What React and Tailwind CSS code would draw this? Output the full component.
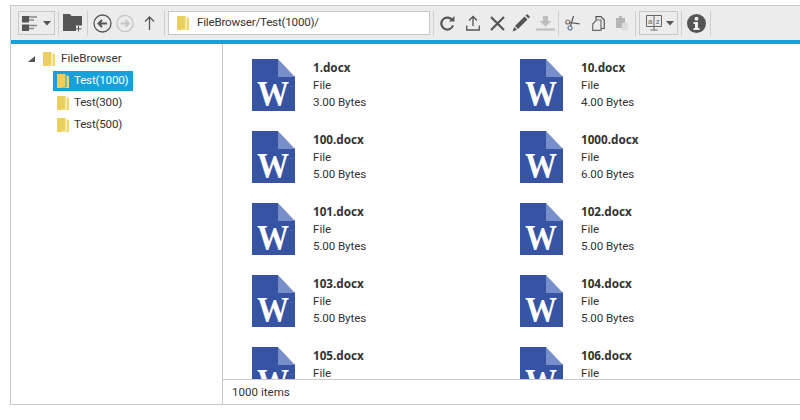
import React from "react";

const files = [
  { name: "1.docx", size: "3.00 Bytes" },
  { name: "10.docx", size: "4.00 Bytes" },
  { name: "100.docx", size: "5.00 Bytes" },
  { name: "1000.docx", size: "6.00 Bytes" },
  { name: "101.docx", size: "5.00 Bytes" },
  { name: "102.docx", size: "5.00 Bytes" },
  { name: "103.docx", size: "5.00 Bytes" },
  { name: "104.docx", size: "5.00 Bytes" },
  { name: "105.docx", size: "5.00 Bytes" },
  { name: "106.docx", size: "5.00 Bytes" },
];

const Sep = () => <div className="w-px h-[25px] bg-[#cfcfcf] shrink-0" />;

const Btn = ({ w = "w-6", children }) => (
  <div className={`${w} h-6 flex items-center justify-center shrink-0`}>{children}</div>
);

const Caret = () => (
  <svg width="9" height="5" viewBox="0 0 9 5"><path d="M0 0h8L4 4.500z" fill="#555" /></svg>
);

const FolderIcon = () => (
  <svg width="12" height="14" viewBox="0 0 12 14" className="shrink-0">
    <path d="M9.500 1.500H11l1 1V14H4l5.500-1z" fill="#efd76c" />
    <path d="M0 0h8.500v12.500L4 14H0z" fill="#ecd05f" />
  </svg>
);

const DocIcon = () => (
  <svg width="43" height="52" viewBox="0 0 43 52" className="shrink-0">
    <path d="M0 0h26v17h17v35H0z" fill="#3753a4" />
    <path d="M26 0l17 18H26z" fill="#768fc8" />
    <text x="5" y="47" textLength="32" lengthAdjust="spacingAndGlyphs" fontSize="36" fontWeight="700" fontFamily="'Liberation Serif', serif" fill="#fff">W</text>
  </svg>
);

const ViewIcon = () => (
  <svg width="16" height="15" viewBox="0 0 16 15">
    <path d="M0 0h7v6.500H0zM0 8.500h7V15H0z" fill="#555" />
    <path d="M7 1h8M7 4h5M7 9.500h8M7 12.500h5" stroke="#888" strokeWidth="1.300" />
  </svg>
);

const NewFolderIcon = () => (
  <svg width="20" height="18" viewBox="0 0 20 18">
    <path d="M0 0h7l1.500 2H19v9.500h-6V17H0z" fill="#555" />
    <path d="M15.500 12v5.500M13 14.800h5.500" stroke="#555" strokeWidth="1" />
  </svg>
);

const CircleArrow = ({ dir, color }) => (
  <svg width="19" height="19" viewBox="0 0 19 19" fill="none" stroke={color} strokeWidth="1.300">
    <circle cx="9.500" cy="9.500" r="8.500" />
    <path
      d={dir === "left" ? "M14 9.500H5.500M9 6L5.500 9.500L9 13" : "M5 9.500h8.500M10 6l3.500 3.500L10 13"}
      strokeWidth="2"
    />
  </svg>
);

const UpArrow = () => (
  <svg width="11" height="14" viewBox="0 0 11 14" fill="none" stroke="#555" strokeWidth="1.300">
    <path d="M5.500 14V1M1 5.500L5.500 1L10 5.500" />
  </svg>
);

const RefreshIcon = () => (
  <svg width="15" height="15" viewBox="0 0 15 15" fill="none">
    <path d="M12.500 4.500A6 6 0 1 0 13 9.500" stroke="#555" strokeWidth="2.200" />
    <path d="M9 5.500h5.500V0z" fill="#555" />
  </svg>
);

const UploadIcon = () => (
  <svg width="14" height="16" viewBox="0 0 14 16" fill="none" stroke="#555" strokeWidth="1.300">
    <path d="M7 11V2M3 5.500L7 1.500l4 4" />
    <path d="M.700 10.500v4.500h12.600v-4.500" />
  </svg>
);

const CloseIcon = () => (
  <svg width="15" height="15" viewBox="0 0 15 15" fill="none" stroke="#555" strokeWidth="2.200">
    <path d="M1 1l13 13M14 1L1 14" />
  </svg>
);

const PencilIcon = () => (
  <svg width="18" height="18" viewBox="0 0 18 18" fill="#555">
    <path d="M3 12L12.500 2.500L15.500 5.500L6 15z" />
    <path d="M2.200 13L5 15.800L.500 17.500z" />
    <path d="M13.500 1.500l1-1a1 1 0 0 1 1.200 0l1.800 1.800a1 1 0 0 1 0 1.200l-1 1z" />
  </svg>
);

const DownloadIcon = () => (
  <svg width="19" height="16" viewBox="0 0 19 16">
    <path d="M7 1h5v5h3.500l-6 5.500-6-5.500H7z" fill="#bdbdbd" />
    <path d="M0 14.500h19" stroke="#bdbdbd" strokeWidth="2" />
  </svg>
);

const CutIcon = () => (
  <svg width="15" height="16" viewBox="0 0 15 16" fill="none" stroke="#555" strokeWidth="1.200">
    <circle cx="2.800" cy="7" r="2" stroke="#8a6a4a" />
    <circle cx="5" cy="13" r="2" stroke="#5a7a9a" />
    <path d="M4.800 7.500L14.500 8.800M5.500 11L8.500 1" />
  </svg>
);

const CopyIcon = () => (
  <svg width="13" height="15" viewBox="0 0 13 15" fill="none" stroke="#555" strokeWidth="1.200">
    <path d="M4 4V.700h5l3.300 3.300v8.500H9" />
    <path d="M.700 8L4.500 4H9v10.300H.700z" fill="#ececec" stroke="#6a6a6a" />
  </svg>
);

const PasteIcon = () => (
  <svg width="13" height="15" viewBox="0 0 13 15">
    <path d="M0 2h3V0h3v2h3v10H0z" fill="#b5b5b5" />
    <path d="M6 7h6v7.500H6z" fill="#dcdcdc" />
  </svg>
);

const SortIcon = () => (
  <svg width="16" height="16" viewBox="0 0 16 16" fill="none" stroke="#666" className="shrink-0">
    <path d="M.5 .5h15v11H.5zM8 .5v14M4.500 15h7" />
    <text x="4.300" y="9" fontSize="8" fontFamily="'Liberation Sans', sans-serif" fill="#7a5a40" stroke="none" textAnchor="middle">a</text>
    <text x="11.800" y="9" fontSize="8" fontFamily="'Liberation Sans', sans-serif" fill="#4a6a8a" stroke="none" textAnchor="middle">z</text>
  </svg>
);

const InfoIcon = () => (
  <svg width="19" height="19" viewBox="0 0 19 19">
    <circle cx="9.500" cy="9.500" r="9.500" fill="#555" />
    <circle cx="9.500" cy="4.800" r="2" fill="#ececec" />
    <path d="M6.500 8h4.500v6h1.500v2h-6v-2H8v-4H6.500z" fill="#ececec" />
  </svg>
);

const Toolbar = () => (
  <div className="h-[34px] bg-[#ececec] flex items-center pl-[7px] shrink-0">
    <div className="w-[37px] h-6 border border-[#c8c8c8] flex items-center pl-[3px] gap-[5px] mr-[3px] shrink-0">
      <ViewIcon />
      <Caret />
    </div>
    <Sep />
    <Btn w="w-[28px]"><NewFolderIcon /></Btn>
    <Sep />
    <Btn w="w-[28px]"><CircleArrow dir="left" color="#555" /></Btn>
    <Btn w="w-[18px]"><CircleArrow dir="right" color="#c4c4c4" /></Btn>
    <Btn w="w-[30px]"><UpArrow /></Btn>
    <Sep />
    <div className="w-[262px] h-6 ml-[3px] mr-[3px] bg-white border border-[#c8c8c8] flex items-center pl-2 gap-2 shrink-0">
      <FolderIcon />
      <span className="text-[#333] tracking-[-0.2px]">FileBrowser/Test(1000)/</span>
    </div>
    <Sep />
    <Btn w="w-[27px]"><RefreshIcon /></Btn>
    <Btn><UploadIcon /></Btn>
    <Btn><CloseIcon /></Btn>
    <Btn><PencilIcon /></Btn>
    <Btn w="w-[25px]"><DownloadIcon /></Btn>
    <Sep />
    <Btn w="w-[27px]"><CutIcon /></Btn>
    <Btn w="w-[24px]"><CopyIcon /></Btn>
    <Btn w="w-[25px]"><PasteIcon /></Btn>
    <Sep />
    <div className="w-[39px] h-6 ml-[3px] mr-[3px] border border-[#c8c8c8] flex items-center pl-[6px] gap-1 shrink-0">
      <SortIcon />
      <Caret />
    </div>
    <Sep />
    <Btn w="w-[28px]"><InfoIcon /></Btn>
    <Sep />
  </div>
);

const TreeItem = ({ label, active }) => (
  <div className={`h-5 w-[80px] flex items-center gap-[5px] pl-1 tracking-[-0.2px] ${active ? "bg-[#16a0dc] text-white" : "text-[#333]"}`}>
    <FolderIcon />
    <span>{label}</span>
  </div>
);

const Tree = () => (
  <div className="w-[212px] border-r border-[#c8c8c8] shrink-0 pt-[5px] pl-[17px]">
    <div className="h-5 flex items-center text-[#333]">
      <svg width="7" height="6" viewBox="0 0 7 6" className="mr-2"><path d="M7 0v6H0z" fill="#555" /></svg>
      <FolderIcon />
      <span className="ml-[6px]">FileBrowser</span>
    </div>
    <div className="ml-[25px] mt-[2px] flex flex-col gap-[2px]">
      <TreeItem label="Test(1000)" active />
      <TreeItem label="Test(300)" />
      <TreeItem label="Test(500)" />
    </div>
  </div>
);

const FileCard = ({ file }) => (
  <div className="h-[72px] flex items-start">
    <DocIcon />
    <div className="ml-[18px] leading-[17.500px] text-[#333]">
      <div className="font-bold text-[11.700px] font-['Noto_Sans',sans-serif]">{file.name}</div>
      <div>File</div>
      <div className="tracking-[-0.1px]">{file.size}</div>
    </div>
  </div>
);

export default function App() {
  return (
    <div className="w-[800px] h-[420px] bg-white overflow-hidden pl-[10px] pt-[5px] text-[11.600px] font-['Roboto',sans-serif]">
      <div className="h-[400px] border border-r-0 border-[#c8c8c8] flex flex-col">
        <Toolbar />
        <div className="h-[4px] bg-[#16a0dc] shrink-0" />
        <div className="flex-1 flex min-h-0">
          <Tree />
          <div className="flex-1 flex flex-col min-w-0">
            <div className="h-[335px] overflow-hidden pl-[29px] pt-[15px] shrink-0 grid grid-cols-[268px_268px] content-start">
              {files.map((f) => (
                <FileCard key={f.name} file={f} />
              ))}
            </div>
            <div className="flex-1 border-t border-[#c8c8c8] flex items-center pl-[9px] pt-px text-[#333]">
              1000 items
            </div>
          </div>
        </div>
      </div>
    </div>
  );
}
